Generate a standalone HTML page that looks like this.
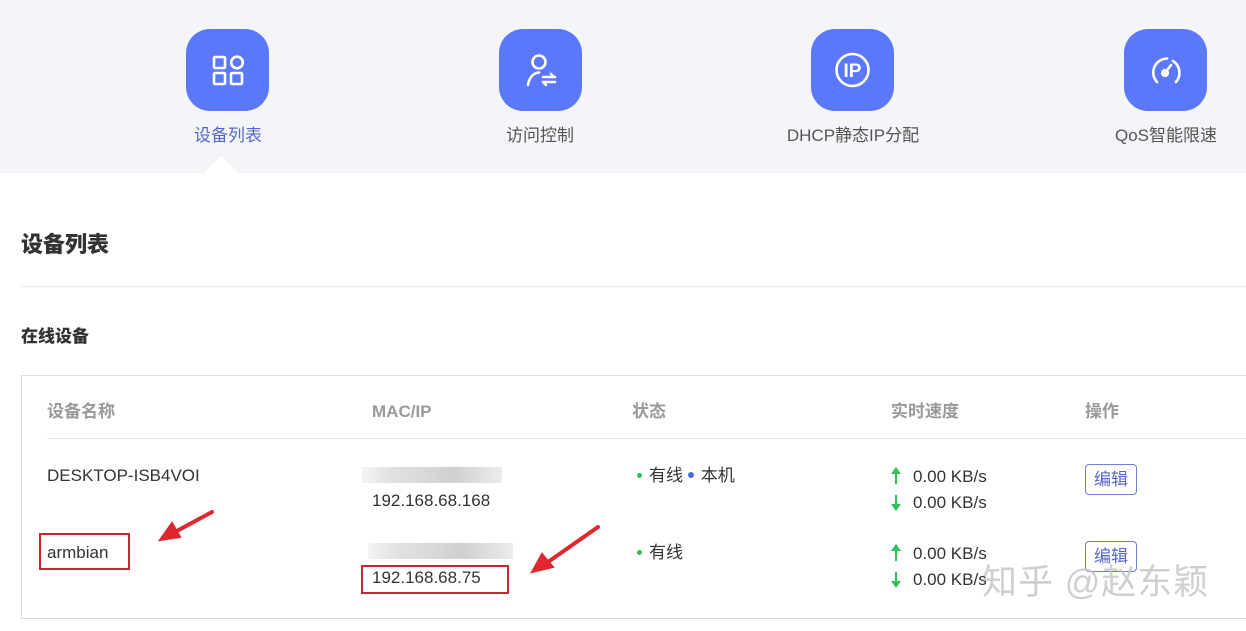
<!DOCTYPE html>
<html><head><meta charset="utf-8"><style>
*{margin:0;padding:0;box-sizing:border-box}
body{width:1246px;height:631px;overflow:hidden;background:#fff;font-family:"Liberation Sans","Noto Sans CJK SC",sans-serif;color:#333;position:relative}
.a{position:absolute;white-space:nowrap;line-height:20px}
.top{position:absolute;left:0;top:0;width:1246px;height:173px;background:#f4f5f8}
.ic{position:absolute;top:29px;width:83px;height:82px;border-radius:24px;background:#5b78fb}
.ic svg{position:absolute;left:0;top:0}
.lb{position:absolute;top:126px;font-size:17px;line-height:20px;color:#555;transform:translateX(-50%);white-space:nowrap}
.dot{display:inline-block;width:6px;height:6px;border-radius:50%;margin:0 7px 3px 0;vertical-align:middle}
.btn{position:absolute;width:52px;height:31px;border:1px solid #6a7fd6;border-radius:4px;color:#5667c9;font-size:17px;text-align:center;line-height:29px}
.blur{position:absolute;height:16px;background:linear-gradient(90deg,#f3f3f3 0,#e2e2e2 20%,#d6d6d6 50%,#cfcfcf 65%,#e0e0e0 85%,#ececec 100%)}
.red{position:absolute;border:2px solid #c8262e}
.h{font-size:17px;font-weight:bold;color:#999;top:402px}
</style></head><body>
<div class="top"></div>
<div class="a" style="left:203px;top:156px;width:0;height:0;border-left:18px solid transparent;border-right:18px solid transparent;border-bottom:18px solid #fff"></div>

<div class="ic" style="left:186px"><svg width="83" height="82" fill="none" stroke="#fff" stroke-width="2.6"><rect x="28" y="28" width="11" height="11" rx="1"/><circle cx="51" cy="33.5" r="5.8"/><rect x="28" y="44" width="11" height="11" rx="1"/><rect x="45" y="44" width="11" height="11" rx="1"/></svg></div>
<div class="ic" style="left:499px"><svg width="83" height="82" fill="none" stroke="#fff" stroke-width="2.6" stroke-linecap="round"><circle cx="40" cy="33" r="6.5"/><path d="M29 56c1-7 5-12 11-12.5"/><path d="M44 48h12M52 45l3 3M44 53h12M47 56l-3-3"/></svg></div>
<div class="ic" style="left:811px"><svg width="83" height="82" fill="none" stroke="#fff" stroke-width="2.6"><circle cx="41.5" cy="41" r="16"/><text x="41.5" y="48" fill="#fff" stroke="none" font-size="19" font-weight="bold" font-family="Liberation Sans" text-anchor="middle">IP</text></svg></div>
<div class="ic" style="left:1124px"><svg width="83" height="82" fill="none" stroke="#fff" stroke-width="2.6" stroke-linecap="round"><path d="M33 53a14 14 0 0 1 10-23.5M49 32a14 14 0 0 1 3 21"/><path d="M41 44l6-8"/><circle cx="41" cy="44" r="2.8" fill="#fff"/></svg></div>

<div class="lb" style="left:228px;color:#5568c8">设备列表</div>
<div class="lb" style="left:540px">访问控制</div>
<div class="lb" style="left:853px">DHCP静态IP分配</div>
<div class="lb" style="left:1166px">QoS智能限速</div>

<div class="a" style="left:21px;top:232px;font-size:22px;line-height:26px;font-weight:900;color:#333">设备列表</div>
<div class="a" style="left:21px;top:286px;width:1225px;height:1px;background:#eaeaea"></div>
<div class="a" style="left:21px;top:327px;font-size:17px;font-weight:900;color:#333">在线设备</div>

<div class="a" style="left:21px;top:375px;width:1240px;height:244px;border:1px solid #ddd"></div>
<div class="a" style="left:47px;top:438px;width:1200px;height:1px;background:#e8e8e8"></div>
<div class="a h" style="left:47px">设备名称</div>
<div class="a h" style="left:372px">MAC/IP</div>
<div class="a h" style="left:632px">状态</div>
<div class="a h" style="left:891px">实时速度</div>
<div class="a h" style="left:1085px">操作</div>

<svg class="a" style="left:0;top:0" width="1246" height="631"><g fill="#2fc259" stroke="#2fc259" stroke-width="2"><line x1="896" y1="472" x2="896" y2="484"/><polygon points="891,474 896,467 901,474" stroke="none"/><line x1="896" y1="495" x2="896" y2="506"/><polygon points="891,504 896,511 901,504" stroke="none"/><line x1="896" y1="549" x2="896" y2="561"/><polygon points="891,551 896,544 901,551" stroke="none"/><line x1="896" y1="572" x2="896" y2="583"/><polygon points="891,581 896,588 901,581" stroke="none"/></g></svg>

<div class="a" style="left:47px;top:466px;font-size:17px">DESKTOP-ISB4VOI</div>
<div class="blur" style="left:362px;top:467px;width:140px"></div>
<div class="a" style="left:372px;top:491px;font-size:17px">192.168.68.168</div>
<div class="a" style="left:637px;top:466px;font-size:17px"><span class="dot" style="background:#2fbf55;width:5px;height:5px"></span>有线 <span class="dot" style="background:#4a67e6"></span>本机</div>
<div class="a" style="left:913px;top:467px;font-size:17px">0.00 KB/s</div>
<div class="a" style="left:913px;top:493px;font-size:17px">0.00 KB/s</div>
<div class="btn" style="left:1085px;top:464px">编辑</div>

<div class="a" style="left:47px;top:543px;font-size:17px">armbian</div>
<div class="red" style="left:39px;top:533px;width:91px;height:37px"></div>
<div class="blur" style="left:368px;top:543px;width:145px"></div>
<div class="a" style="left:372px;top:568px;font-size:17px">192.168.68.75</div>
<div class="red" style="left:361px;top:565px;width:148px;height:29px"></div>
<div class="a" style="left:637px;top:543px;font-size:17px"><span class="dot" style="background:#2fbf55;width:5px;height:5px"></span>有线</div>
<div class="a" style="left:913px;top:544px;font-size:17px">0.00 KB/s</div>
<div class="a" style="left:913px;top:570px;font-size:17px">0.00 KB/s</div>
<div class="btn" style="left:1085px;top:541px">编辑</div>

<svg class="a" style="left:0;top:0" width="1246" height="631"><g stroke="#e0262e" stroke-width="4" stroke-linecap="round" fill="#e0262e"><line x1="212" y1="512" x2="175" y2="532"/><polygon points="160,540 172,523 180,537" stroke-width="2"/><line x1="598" y1="527" x2="548" y2="562"/><polygon points="532,572 542,554 553,567" stroke-width="2"/></g></svg>

<div class="a" style="left:982px;top:565px;font-size:35px;line-height:36px;color:rgba(195,195,195,0.8);letter-spacing:1px">知乎 @赵东颖</div>
</body></html>
